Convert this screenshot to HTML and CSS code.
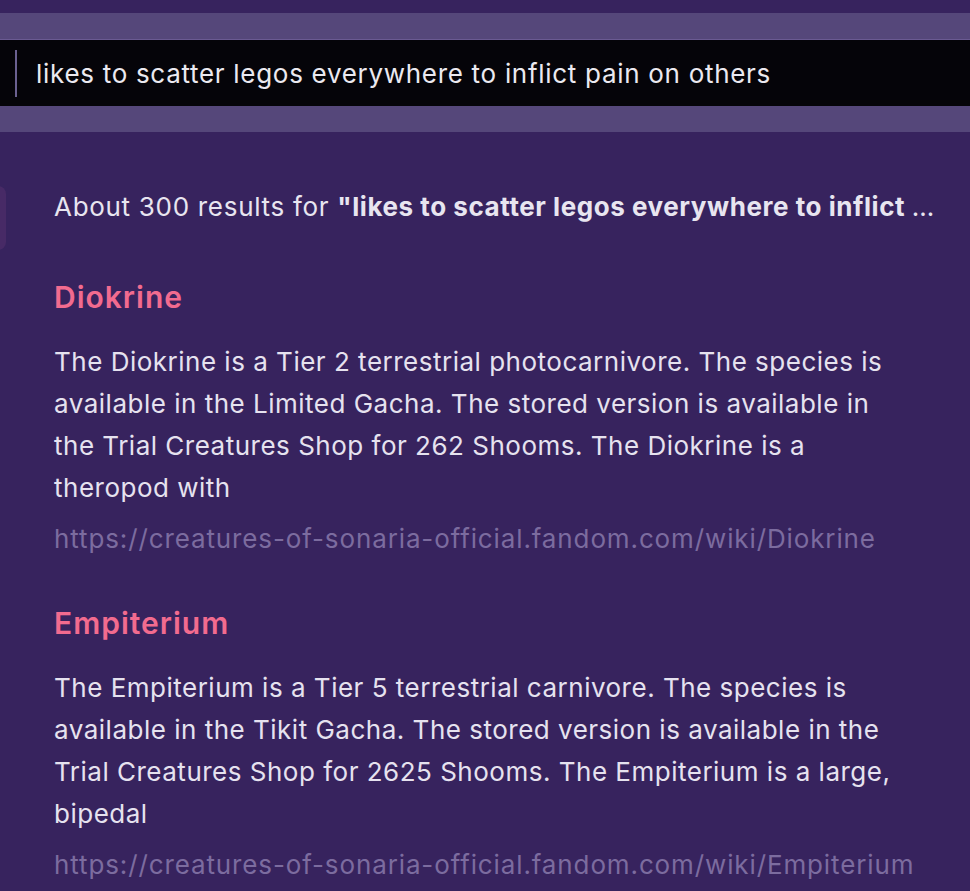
FILE: index.html
```html
<!DOCTYPE html>
<html lang="en">
<head>
<meta charset="utf-8">
<title>Search</title>
<link rel="stylesheet" href="styles.css">
</head>
<body>
<div class="page">
  <div class="top-gap"></div>
  <div class="search-band">
    <div class="search-input">
      <span class="caret-bar"></span>
      <span class="query">likes to scatter legos everywhere to inflict pain on others</span>
    </div>
  </div>
  <div class="side-tab"></div>
  <main class="results">
    <p class="summary">About 300 results for <b>"likes to scatter legos everywhere to inflict pain on others"</b></p>
    <article class="result">
      <h2 class="result-title">Diokrine</h2>
      <p class="result-text">The Diokrine is a Tier 2 terrestrial photocarnivore. The species is available in the Limited Gacha. The stored version is available in the Trial Creatures Shop for 262 Shooms. The Diokrine is a theropod with</p>
      <p class="result-url">https://creatures-of-sonaria-official.fandom.com/wiki/Diokrine</p>
    </article>
    <article class="result">
      <h2 class="result-title">Empiterium</h2>
      <p class="result-text">The Empiterium is a Tier 5 terrestrial carnivore. The species is available in the Tikit Gacha. The stored version is available in the Trial Creatures Shop for 2625 Shooms. The Empiterium is a large, bipedal</p>
      <p class="result-url">https://creatures-of-sonaria-official.fandom.com/wiki/Empiterium</p>
    </article>
  </main>
</div>
</body>
</html>
```

FILE: styles.css
```css
html, body {
  margin: 0;
  padding: 0;
}

body {
  background: #37235e;
  font-family: Inter, "Noto Sans", "Liberation Sans", sans-serif;
  color: #e6e2ef;
  overflow: hidden;
}

.page {
  position: relative;
  width: 970px;
  height: 891px;
  overflow: hidden;
}

.top-gap {
  height: 13px;
}

.search-band {
  background: #55477a;
  padding: 26px 0;
}

.search-input {
  display: flex;
  align-items: center;
  height: 66px;
  background: #050409;
  border-top: 1px solid #6a5a92;
  padding-left: 15px;
}

.caret-bar {
  width: 2px;
  height: 47px;
  background: #6b6190;
  margin-right: 19px;
  flex: none;
}

.query {
  font-size: 26px;
  letter-spacing: 0.7px;
  color: #ebe9f0;
  white-space: nowrap;
}

.side-tab {
  position: absolute;
  left: -14px;
  top: 186px;
  width: 20px;
  height: 64px;
  border-radius: 8px;
  background: #472a66;
}

.results {
  padding: 0 30px 0 54px;
}

.summary {
  margin: 60px 0 0;
  font-size: 26px;
  letter-spacing: 0.7px;
  line-height: 30px;
  white-space: nowrap;
  overflow: hidden;
  text-overflow: ellipsis;
  width: 888px;
  color: #e8e5f0;
}

.summary b {
  font-weight: 700;
  letter-spacing: 0.55px;
}

.result-title {
  margin: 58px 0 0;
  font-size: 30px;
  letter-spacing: 1px;
  line-height: 34px;
  font-weight: 600;
  color: #f26b8f;
}

.result + .result .result-title {
  margin-top: 46px;
}

.result-text {
  margin: 27px 0 0;
  font-size: 26px;
  letter-spacing: 0.5px;
  line-height: 42px;
  width: 852px;
  color: #e6e2ef;
}

.result-url {
  margin: 9px 0 0;
  font-size: 26px;
  letter-spacing: 0.88px;
  line-height: 42px;
  color: #7c6c9f;
  white-space: nowrap;
}
```
